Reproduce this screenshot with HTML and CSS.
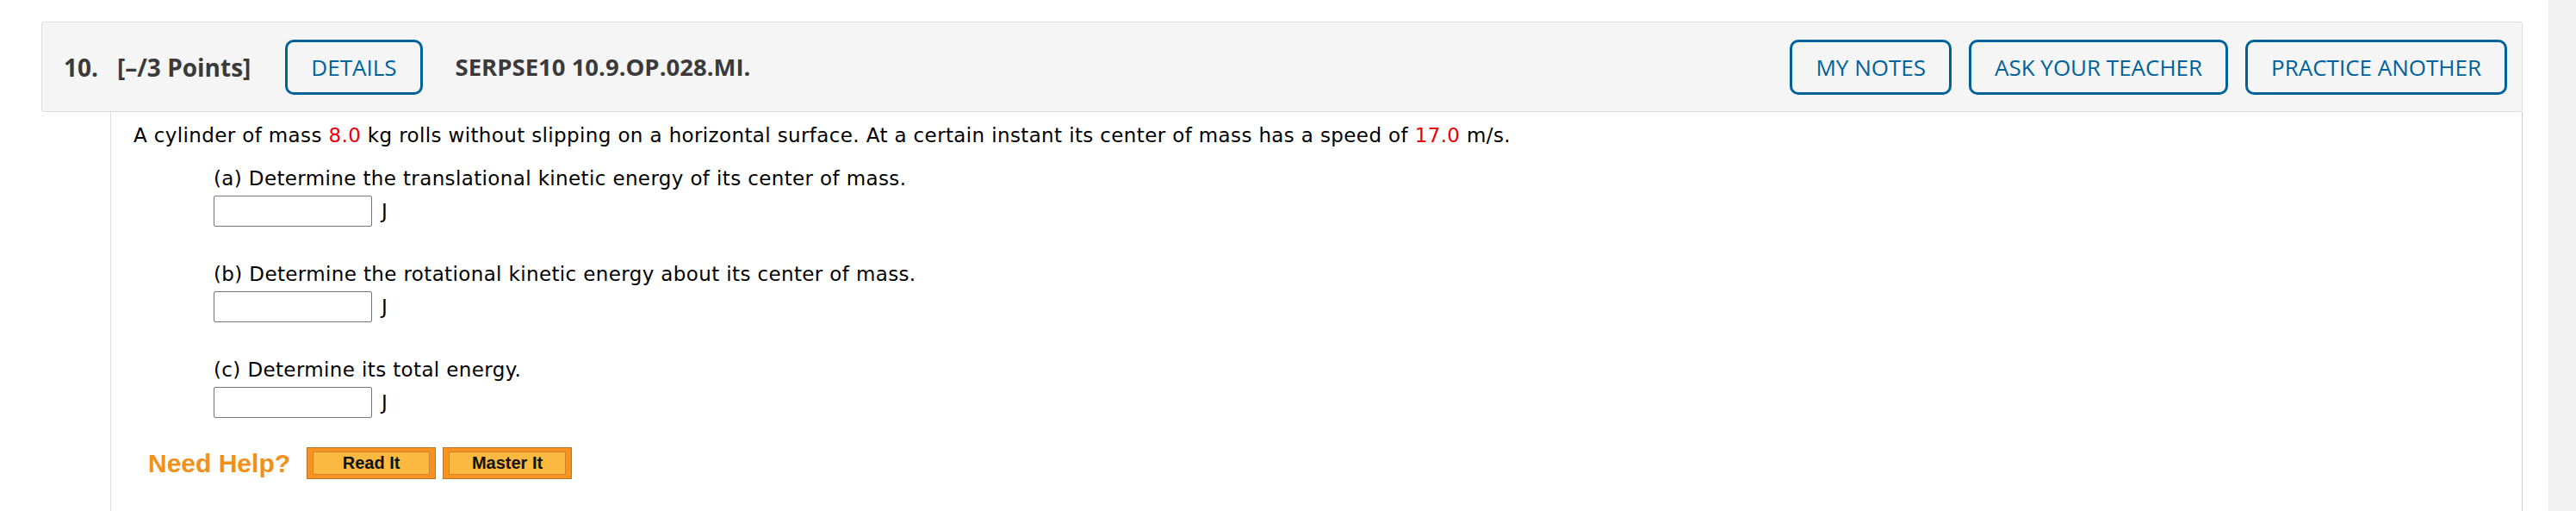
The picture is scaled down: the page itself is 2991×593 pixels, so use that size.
FILE: index.html
```html
<!DOCTYPE html>
<html lang="en">
<head>
  <meta charset="UTF-8" />
  <meta name="viewport" content="width=device-width, initial-scale=1" />
  <title>Question 10</title>
  <link rel="stylesheet" href="styles.css">
</head>
<body>
  <div class="page">
    <main class="content">
      <section class="question">
        <div class="q-head">
          <span class="q-num">10.</span>
          <span class="q-points">[–/3 Points]</span>
          <button class="outline-btn details">DETAILS</button>
          <span class="q-code">SERPSE10 10.9.OP.028.MI.</span>
          <div class="head-actions">
            <button class="outline-btn">MY NOTES</button>
            <button class="outline-btn">ASK YOUR TEACHER</button>
            <button class="outline-btn">PRACTICE ANOTHER</button>
          </div>
        </div>

        <div class="q-body">
          <p class="prompt">A cylinder of mass <span class="val">8.0</span> kg rolls without slipping on a horizontal surface. At a certain instant its center of mass has a speed of <span class="val">17.0</span> m/s.</p>

          <div class="parts">
            <div class="part">
              <div class="part-label">(a) Determine the translational kinetic energy of its center of mass.</div>
              <div class="answer-row">
                <input type="text" class="answer" />
                <span class="unit">J</span>
              </div>
            </div>
            <div class="part">
              <div class="part-label">(b) Determine the rotational kinetic energy about its center of mass.</div>
              <div class="answer-row">
                <input type="text" class="answer" />
                <span class="unit">J</span>
              </div>
            </div>
            <div class="part">
              <div class="part-label">(c) Determine its total energy.</div>
              <div class="answer-row">
                <input type="text" class="answer" />
                <span class="unit">J</span>
              </div>
            </div>
          </div>

          <div class="help-row">
            <span class="need-help">Need Help?</span>
            <button class="help-btn"><span>Read It</span></button>
            <button class="help-btn"><span>Master It</span></button>
          </div>
        </div>
      </section>
    </main>
    <div class="scroll-track"></div>
  </div>
</body>
</html>
```

FILE: styles.css
```css
body {
  margin: 0;
  padding: 0;
  background: #fff;
  font-family: Verdana, "DejaVu Sans", sans-serif;
  color: #000;
}
.page {
  display: flex;
  height: 593px;
}
.content {
  flex: 1;
  padding: 25px 30px 0 48px;
  display: flex;
}
.question {
  flex: 1;
  display: flex;
  flex-direction: column;
}
.q-head {
  height: 105px;
  box-sizing: border-box;
  display: flex;
  align-items: center;
  padding: 0 17px 0 25px;
  background: #f5f5f5;
  border: 1px solid #ddd;
  border-radius: 3px;
  font-family: "Open Sans", sans-serif;
  color: #3a3a3a;
}
.q-num,
.q-points,
.q-code {
  font-size: 28px;
  font-weight: 700;
}
.q-points {
  margin-left: 22px;
}
.q-code {
  margin-left: 38px;
  font-size: 27.5px;
}
.outline-btn {
  height: 64px;
  padding: 0 27px;
  background: transparent;
  border: 3px solid #00629b;
  border-radius: 10px;
  color: #00629b;
  font-family: "Open Sans", sans-serif;
  font-size: 26px;
  cursor: pointer;
}
.details {
  margin-left: 40px;
}
.head-actions {
  margin-left: auto;
  display: flex;
  gap: 20px;
}
.q-body {
  flex: 1;
  margin-left: 80px;
  padding: 13px 0 0 26px;
  border-left: 1px solid #ddd;
  border-right: 1px solid #ccc;
  font-size: 23px;
  letter-spacing: 0.37px;
  line-height: 28px;
}
.prompt {
  margin: 0;
}
.val {
  color: #e8000b;
}
.parts {
  display: flex;
  flex-direction: column;
  gap: 41px;
  margin: 22px 0 34px 93px;
}
.answer-row {
  display: flex;
  align-items: center;
  gap: 11px;
  margin-top: 6px;
}
.answer {
  width: 184px;
  height: 36px;
  box-sizing: border-box;
  margin: 0;
  border: 1px solid #767676;
  border-radius: 2px;
}
.help-row {
  display: flex;
  align-items: center;
  margin-left: 17px;
  letter-spacing: 0;
}
.need-help {
  font-family: Arial, "Liberation Sans", sans-serif;
  font-weight: bold;
  font-size: 30px;
  color: #f3901a;
  margin-right: 19px;
}
.help-btn {
  width: 150px;
  height: 37px;
  padding: 4px 6px;
  margin-right: 8px;
  box-sizing: border-box;
  background: #f7931e;
  border: 1px solid #b8742a;
  cursor: pointer;
}
.help-btn span {
  display: block;
  height: 100%;
  box-sizing: border-box;
  background: #fbb941;
  border: 1px solid #cf8430;
  font-family: Arial, "Liberation Sans", sans-serif;
  font-weight: bold;
  font-size: 20px;
  line-height: 25px;
  color: #111;
}
.scroll-track {
  width: 32px;
  background: #f1f1f1;
}
```
